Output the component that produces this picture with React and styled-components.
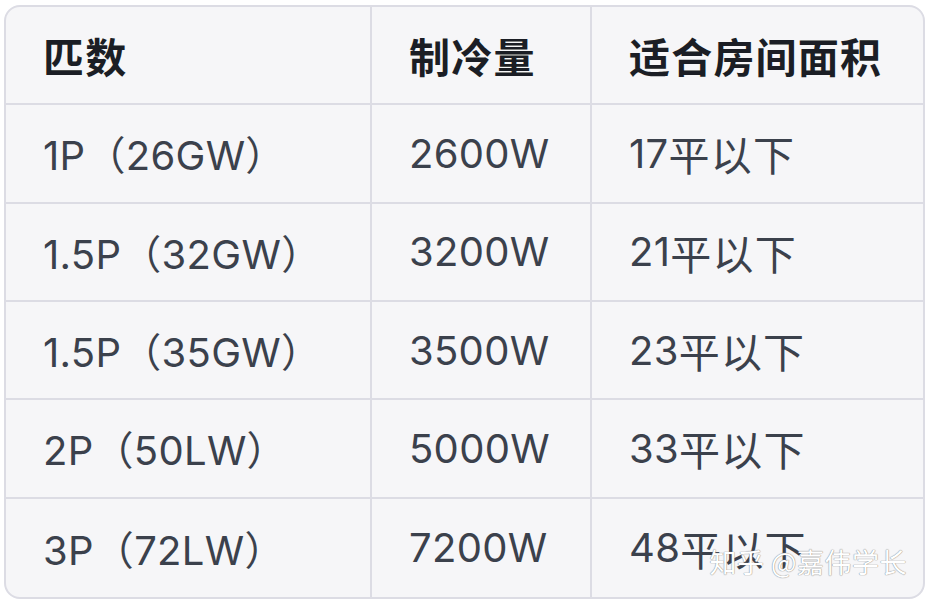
import React from "react";
import styled, { createGlobalStyle } from "styled-components";

const GlobalStyle = createGlobalStyle`
  html, body {
    margin: 0;
    padding: 0;
    background: #ffffff;
  }
`;

const Page = styled.div`
  position: relative;
  width: 931px;
  height: 605px;
  padding: 5px 6px 6px 4px;
  box-sizing: border-box;
`;

const Table = styled.div`
  display: grid;
  grid-template-columns: 366px 220px 1fr;
  grid-auto-rows: 1fr;
  height: 100%;
  border: 2px solid #dcdce4;
  border-radius: 16px;
  overflow: hidden;
  background: #f6f6f8;
  box-sizing: border-box;
  font-family: "Inter", "Noto Sans CJK SC", sans-serif;
`;

const Cell = styled.div`
  display: flex;
  align-items: center;
  padding: 0 0 0 37px;
  box-sizing: border-box;
  font-size: 40px;
  letter-spacing: 0.3px;
  white-space: pre;
  font-weight: ${p => (p.$head ? 700 : 400)};
  color: ${p => (p.$head ? "#1b1e25" : "#3b414c")};
  border-right: ${p => (p.$last ? "none" : "2px solid #dcdce4")};
  border-bottom: ${p => (p.$bottom ? "none" : "2px solid #dcdce4")};
`;

const Han = styled.span`
  font-family: "Noto Sans CJK SC", sans-serif;
  font-size: 41px;
  letter-spacing: 1.2px;
`;

const Watermark = styled.div`
  position: absolute;
  right: 24px;
  bottom: 24px;
  font-family: "Noto Sans CJK SC", sans-serif;
  font-size: 27px;
  color: #ffffff;
  text-shadow: 0 0 1px #8a8a8a, 0 0 1px #8a8a8a;
  letter-spacing: 0.5px;
`;

const head = ["匹数", "制冷量", "适合房间面积"];

const rows = [
  ["1P（26GW）", "2600W", "17平以下"],
  ["1.5P（32GW）", "3200W", "21平以下"],
  ["1.5P（35GW）", "3500W", "23平以下"],
  ["2P（50LW）", "5000W", "33平以下"],
  ["3P（72LW）", "7200W", "48平以下"]
];

// split text so Han characters get the slightly wider CJK face
const renderText = text =>
  text.split(/([\u4e00-\u9fff]+)/).map((part, i) =>
    /[\u4e00-\u9fff]/.test(part) ? <Han key={i}>{part}</Han> : part
  );

export default function App() {
  return (
    <Page>
      <GlobalStyle />
      <Table>
        {head.map((h, i) => (
          <Cell key={h} $head $last={i === 2}>
            {renderText(h)}
          </Cell>
        ))}
        {rows.map((r, ri) =>
          r.map((c, ci) => (
            <Cell key={ri + "-" + ci} $last={ci === 2} $bottom={ri === rows.length - 1}>
              {renderText(c)}
            </Cell>
          ))
        )}
      </Table>
      <Watermark>知乎 @嘉伟学长</Watermark>
    </Page>
  );
}
